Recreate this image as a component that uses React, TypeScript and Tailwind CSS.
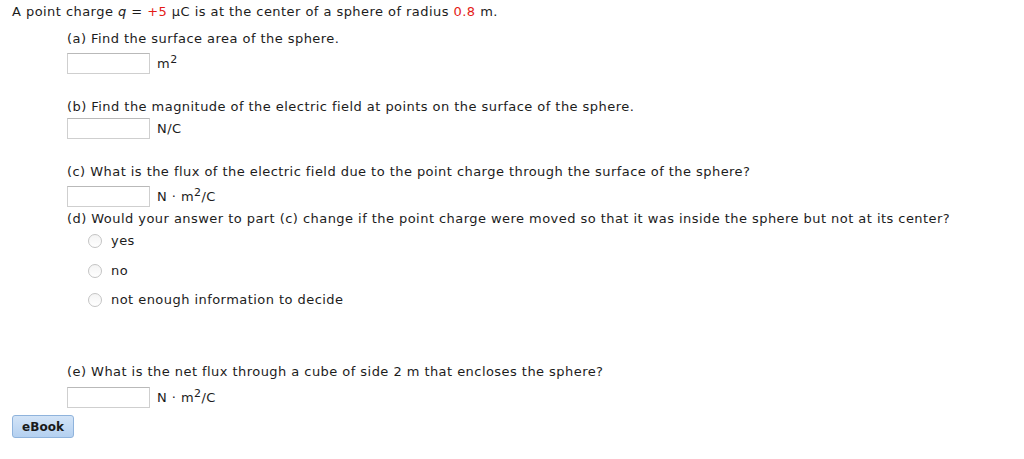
import React from "react";

function AnswerBox({ unit }: { unit: React.ReactNode }) {
  return (
    <div className="flex items-center">
      <div className="w-[83px] h-[21px] border border-[#cfcfcf] border-t-[#b9b9b9] bg-white" />
      <span className="ml-[7px] leading-4">{unit}</span>
    </div>
  );
}

function Radio({ label, className }: { label: string; className: string }) {
  return (
    <div className={`flex items-center ml-[21px] h-4 ${className}`}>
      <span className="w-[14px] h-[14px] rounded-full border border-[#c4c4c4] bg-gradient-to-b from-[#f4f4f4] to-white" />
      <span className="ml-[9px] leading-4">{label}</span>
    </div>
  );
}

const Sq = () => <sup className="text-[11px] relative -top-[5px]">2</sup>;

const fluxUnit = (
  <>
    N · m<Sq />/C
  </>
);

export default function App() {
  return (
    <div
      className="w-[1024px] h-[459px] bg-white text-[#1c1c1c] text-[13px] tracking-[0.45px] pl-3 pt-1"
      style={{ fontFamily: '"DejaVu Sans", Verdana, sans-serif' }}
    >
      <p className="h-4 leading-4">
        A point charge <i>q</i> = <span className="text-[#e41b17]">+5</span> μC is at the center of a sphere of
        radius <span className="text-[#e41b17]">0.8</span> m.
      </p>

      <div className="ml-[55px]">
        <p className="h-4 leading-4 mt-[11px]">(a) Find the surface area of the sphere.</p>
        <div className="mt-[6px]">
          <AnswerBox
            unit={
              <>
                m<Sq />
              </>
            }
          />
        </div>

        <p className="h-4 leading-4 mt-[25px]">(b) Find the magnitude of the electric field at points on the surface of the sphere.</p>
        <div className="mt-[3px]">
          <AnswerBox unit="N/C" />
        </div>

        <p className="h-4 leading-4 mt-[25px]">(c) What is the flux of the electric field due to the point charge through the surface of the sphere?</p>
        <div className="mt-[6px]">
          <AnswerBox unit={fluxUnit} />
        </div>

        <p className="h-4 leading-4 mt-[4px]">
          (d) Would your answer to part (c) change if the point charge were moved so that it was inside the sphere but not at its center?
        </p>
        <Radio label="yes" className="mt-[6px]" />
        <Radio label="no" className="mt-[14px]" />
        <Radio label="not enough information to decide" className="mt-[13px]" />

        <p className="h-4 leading-4 mt-[56px]">(e) What is the net flux through a cube of side 2 m that encloses the sphere?</p>
        <div className="mt-[7px]">
          <AnswerBox unit={fluxUnit} />
        </div>
      </div>

      <button
        type="button"
        className="mt-[7px] w-[62px] h-[23px] rounded-[3px] border border-[#8fb3dc] bg-gradient-to-b from-[#d3e4f7] to-[#b4d0f0] text-[12px] font-bold text-[#1a1a1a] leading-none tracking-normal"
        style={{ fontFamily: '"DejaVu Sans", Verdana, sans-serif' }}
      >
        eBook
      </button>
    </div>
  );
}
